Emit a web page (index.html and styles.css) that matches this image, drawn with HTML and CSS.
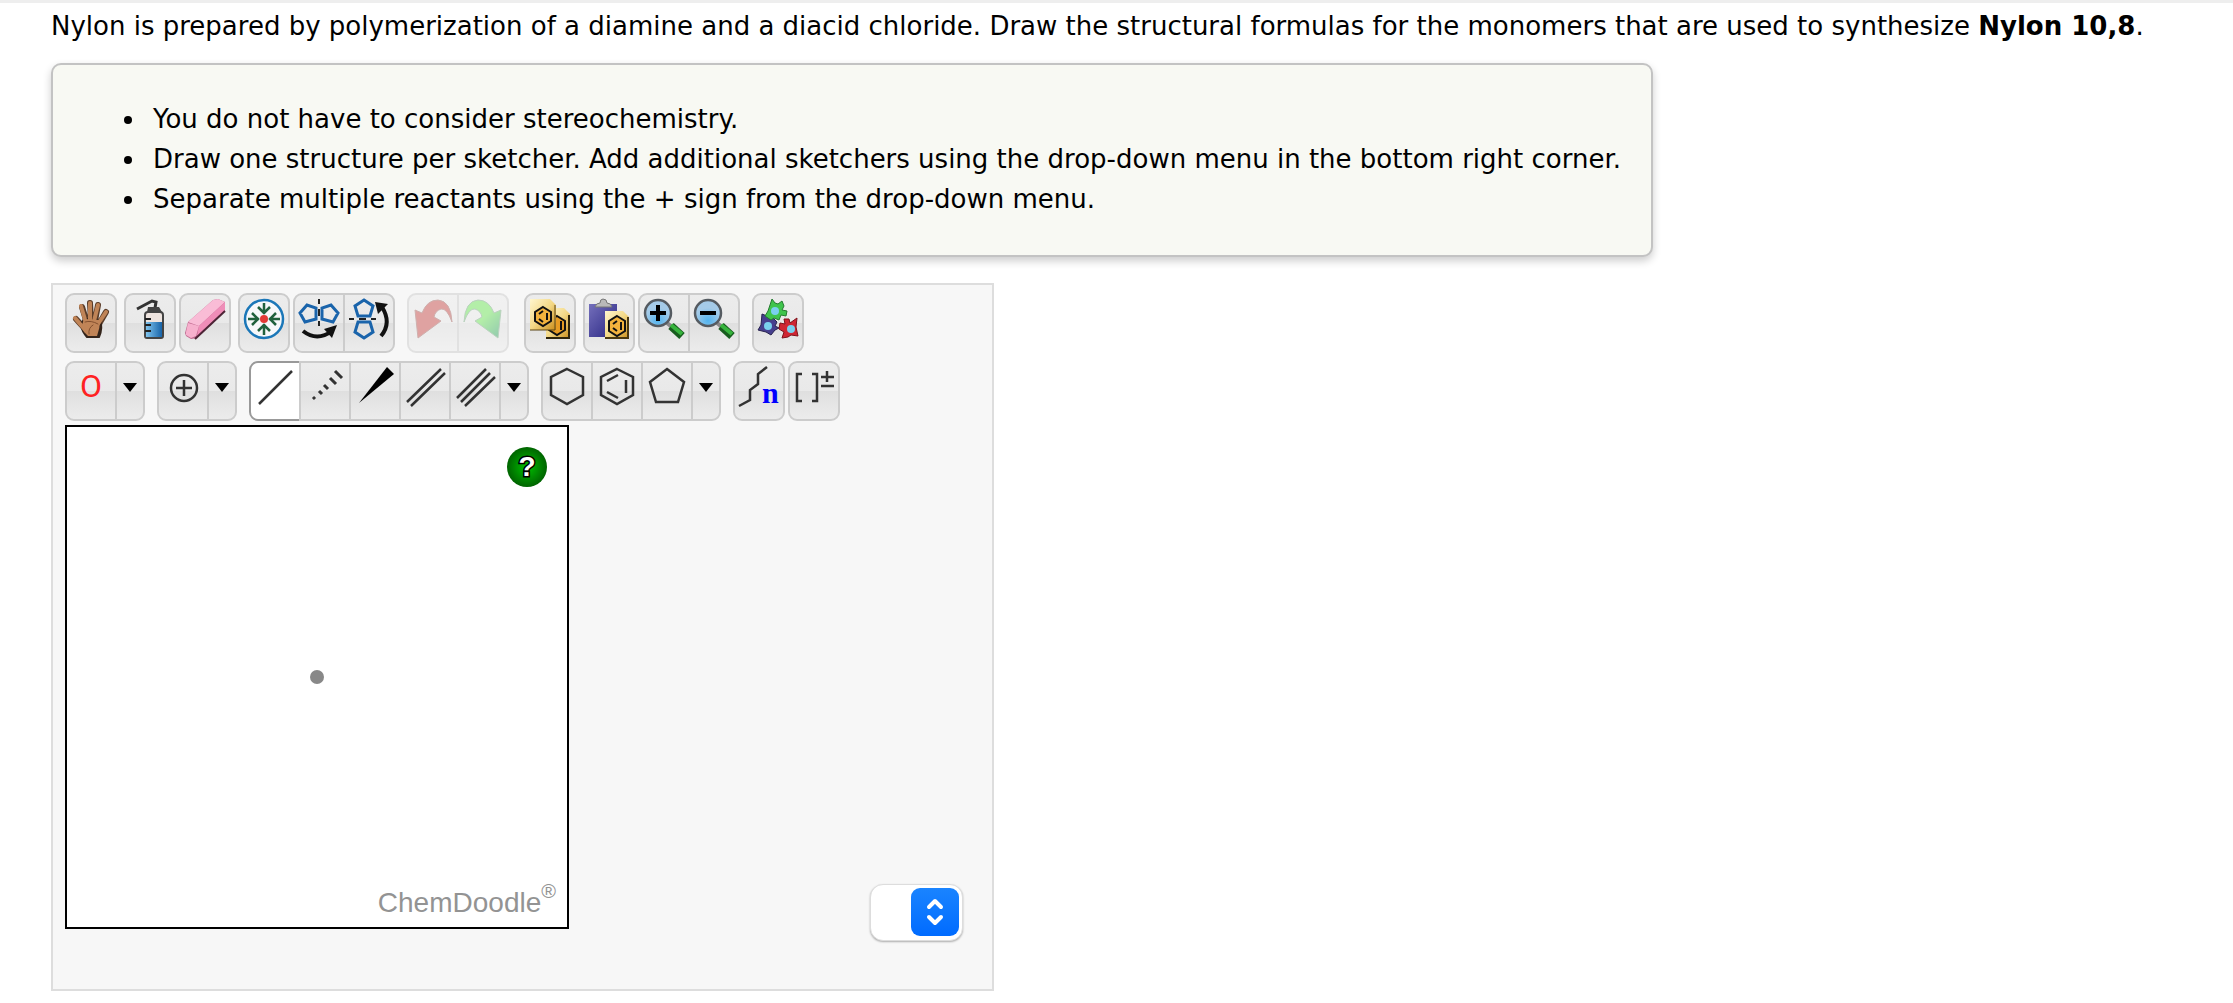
FILE: index.html
```html
<!DOCTYPE html>
<html lang="en">
<head>
  <meta charset="UTF-8" />
  <meta name="viewport" content="width=device-width, initial-scale=1.0"/>
  <title>Nylon 10,8</title>
  <link rel="stylesheet" href="styles.css">
</head>
<body>
  <main class="question">
    <p class="prompt">Nylon is prepared by polymerization of a diamine and a diacid chloride. Draw the structural formulas for the monomers that are used to synthesize <b>Nylon 10,8</b>.</p>

    <div class="hints">
      <ul>
        <li>You do not have to consider stereochemistry.</li>
        <li>Draw one structure per sketcher. Add additional sketchers using the drop-down menu in the bottom right corner.</li>
        <li>Separate multiple reactants using the + sign from the drop-down menu.</li>
      </ul>
    </div>

    <div class="sketcher">
      <!-- edit tools -->
      <div class="toolbar">
        <div class="group">
          <button type="button" class="tool" aria-label="Move">
            <svg viewBox="0 0 40 40">
              <g fill="none" stroke-linecap="round" stroke-linejoin="round">
                <path stroke="#5b3c28" stroke-width="6" d="M16 24L11 8M20 22L19 4M24 22L27 6M28 25L35 13M16 32L5 20"/>
                <path fill="#33241b" stroke="#33241b" stroke-width="2" d="M13 20L29 21Q32 29 28 38L16 38Q11 32 10 26Z"/>
                <path stroke="#c08457" stroke-width="4" d="M15 24L10 7M19 22L19 4M23 22L27 6M27 25L35 13M15 32L4 19"/>
                <path fill="#c08457" d="M13 20L29 21Q29 29 26 37L17 37Q11 32 11 26Z"/>
                <path stroke="#83502f" d="M14 23Q20 21 27 25M18 35Q17 29 22 26"/>
              </g>
            </svg>
          </button>
        </div>
        <div class="group near">
          <button type="button" class="tool" aria-label="Clear">
            <svg viewBox="0 0 40 40">
              <defs><linearGradient id="liquid"><stop offset="0" stop-color="#7fc4ee"/><stop offset="1" stop-color="#1763a8"/></linearGradient></defs>
              <path d="M7 10L22 2L26 3L25 9" fill="none" stroke="#333" stroke-width="3"/>
              <path d="M18 8H29L32 13H17Z" fill="#444"/>
              <path d="M15 16Q15 13 18 13H30Q33 13 33 16V37Q33 39 31 39H17Q15 39 15 37Z" fill="#eee4df" stroke="#444" stroke-width="2"/>
              <path d="M16 23H32V38H16Z" fill="url(#liquid)"/>
              <path d="M15 20H21M15 26H21M15 32H21" stroke="#222" stroke-width="2"/>
            </svg>
          </button>
        </div>
        <div class="group">
          <button type="button" class="tool" aria-label="Erase">
            <svg viewBox="0 0 40 40">
              <path d="M0 34L3 23L28 1L33 0L40 3V12L12 39L6 40L1 37Z" fill="#c06a90"/>
              <path d="M3 23L28 1L33 0L40 3L14 27Z" fill="#f9bcd6"/>
              <path d="M14 27L40 3V11L12 37Z" fill="#ef8db8"/>
              <path d="M1 33L3 24L14 27L11 37L6 39L1 36Z" fill="#f6b0cd"/>
              <path d="M10 40L40 12" stroke="#4c2436" stroke-width="2"/>
            </svg>
          </button>
        </div>
        <div class="group near">
          <button type="button" class="tool" aria-label="Center">
            <svg viewBox="0 0 40 40">
              <circle cx="20" cy="20" r="19" fill="#f6f8fa" stroke="#1b77b8" stroke-width="2.5"/>
              <g fill="none" stroke="#20613d" stroke-width="2.5">
                <path d="M20 4V15M14 8L20 14L26 8"/>
                <path d="M20 36V25M14 32L20 26L26 32"/>
                <path d="M4 20H15M8 14L14 20L8 26"/>
                <path d="M36 20H25M32 14L26 20L32 26"/>
              </g>
              <circle cx="20" cy="20" r="4" fill="#e23a36"/>
            </svg>
          </button>
        </div>
        <div class="group">
          <button type="button" class="tool" aria-label="Flip horizontally">
            <svg viewBox="0 0 40 40">
              <g fill="none">
                <path d="M1 14L8 6L17 9V20L6 23ZM39 14L32 6L23 9V20L34 23Z" stroke="#1a64ab" stroke-width="3"/>
                <path d="M20 0V5M20 10V17M20 22V27" stroke="#222" stroke-width="2"/>
                <path d="M4 32Q18 43 33 32" stroke="#111" stroke-width="4"/>
              </g>
              <path d="M25 30L38 26L33 39Z" fill="#111"/>
            </svg>
          </button>
          <button type="button" class="tool" aria-label="Flip vertically">
            <svg viewBox="0 0 40 40">
              <g fill="none">
                <path d="M15 1L24 7L21 17H9L6 7ZM15 39L24 33L21 23H9L6 33Z" stroke="#1a64ab" stroke-width="3"/>
                <path d="M0 20H5M10 20H17M22 20H27" stroke="#222" stroke-width="2"/>
                <path d="M32 37Q43 24 33 8" stroke="#111" stroke-width="4"/>
              </g>
              <path d="M26 3L39 5L29 15Z" fill="#111"/>
            </svg>
          </button>
        </div>
        <div class="group far disabled">
          <button type="button" class="tool" disabled aria-label="Undo">
            <svg viewBox="0 0 40 40">
              <path d="M2 11L9 14Q14 1 25 1Q38 2 39 23Q34 9 28 10Q22 12 21 18L28 22L5 39Z" fill="#c9504e" stroke="#a86a66"/>
            </svg>
          </button>
          <button type="button" class="tool" disabled aria-label="Redo">
            <svg viewBox="0 0 40 40">
              <defs><linearGradient id="redo" x1="0" y1="0" x2="1" y2="1"><stop offset="0.5" stop-color="#72e65c"/><stop offset="1" stop-color="#2c9a68"/></linearGradient></defs>
              <path d="M38 11L31 14Q26 1 15 1Q2 2 1 23Q6 9 12 10Q18 12 19 18L12 22L35 39Z" fill="url(#redo)" stroke="#7fae88"/>
            </svg>
          </button>
        </div>
        <div class="group farther">
          <button type="button" class="tool" aria-label="Copy">
            <svg viewBox="0 0 40 40">
              <defs><linearGradient id="paper" x1="0" y1="0" x2="1" y2="1"><stop offset="0" stop-color="#fff6cf"/><stop offset="0.5" stop-color="#f3d886"/><stop offset="1" stop-color="#c98b16"/></linearGradient></defs>
              <path d="M16 9H34L40 15V40H16Z" fill="url(#paper)"/>
              <path d="M16 39H39V16" fill="none" stroke="#30260c" stroke-width="2"/>
              <path d="M27 17L35 22V31L27 36L19 31V22Z" fill="#e79c23" stroke="#111" stroke-width="2"/>
              <path d="M31 22V31" stroke="#111" stroke-width="2"/>
              <path d="M0 0H20L26 6V31H0Z" fill="url(#paper)"/>
              <path d="M0 31H25V6" fill="none" stroke="#5b4719"/>
              <path d="M13 8L21 13V22L13 27L5 22V13Z" fill="#f3b33d" stroke="#111" stroke-width="2"/>
              <path d="M9 15L13 12M9 20L13 23M17 14V21" stroke="#111" stroke-width="2"/>
            </svg>
          </button>
        </div>
        <div class="group near">
          <button type="button" class="tool" aria-label="Paste">
            <svg viewBox="0 0 40 40">
              <defs><linearGradient id="board" x1="0" y1="0" x2="1" y2="1"><stop offset="0" stop-color="#746fbb"/><stop offset="1" stop-color="#292683"/></linearGradient></defs>
              <path d="M0 5H28V38H0Z" fill="url(#board)"/>
              <path d="M6 8Q7 4 11 4Q11 0 14 0Q18 0 18 4Q22 4 23 8Z" fill="#b9b9b9" stroke="#777"/>
              <path d="M16 12H34L40 18V40H16Z" fill="url(#paper)"/>
              <path d="M16 39H39V18" fill="none" stroke="#4b3910" stroke-width="2"/>
              <path d="M28 17L36 22V32L28 37L20 32V22Z" fill="#f3b33d" stroke="#111" stroke-width="2"/>
              <path d="M24 25L28 22M24 29L28 32M32 23V31" stroke="#111" stroke-width="2"/>
            </svg>
          </button>
        </div>
        <div class="group">
          <button type="button" class="tool" aria-label="Zoom in">
            <svg viewBox="0 0 40 40">
              <defs><radialGradient id="lens" cy="0.8"><stop offset="0" stop-color="#52b4ef"/><stop offset="1" stop-color="#a5cbe8"/></radialGradient></defs>
              <path d="M22 23L29 29" stroke="#888" stroke-width="4"/>
              <path d="M27 27L38 37" stroke="#175c1e" stroke-width="8"/>
              <path d="M27 26L38 35" stroke="#37b43d" stroke-width="4"/>
              <circle cx="14" cy="14" r="13" fill="url(#lens)" stroke="#555b61" stroke-width="2.5"/>
              <path d="M6 14H22M14 6V22" stroke="#000" stroke-width="4"/>
            </svg>
          </button>
          <button type="button" class="tool" aria-label="Zoom out">
            <svg viewBox="0 0 40 40">
              <path d="M22 23L29 29" stroke="#888" stroke-width="4"/>
              <path d="M27 27L38 37" stroke="#175c1e" stroke-width="8"/>
              <path d="M27 26L38 35" stroke="#37b43d" stroke-width="4"/>
              <circle cx="14" cy="14" r="13" fill="url(#lens)" stroke="#555b61" stroke-width="2.5"/>
              <path d="M6 14H22" stroke="#000" stroke-width="4"/>
            </svg>
          </button>
        </div>
        <div class="group far">
          <button type="button" class="tool" aria-label="Functional groups">
            <svg viewBox="0 0 40 40">
              <path d="M4 15L9 17L11 20L15 19L19 23L17 27L21 29L17 31L13 36L8 33L0 31L3 26Z" fill="#463f8e" stroke="#28234e"/>
              <path d="M14 0L17 4L20 5L24 2L26 7L24 11L29 12L28 17L23 16L21 21L16 19L13 21L7 17L10 12Z" fill="#3fc44c" stroke="#257b30"/>
              <path d="M22 24L27 25L26 20L31 20L32 24L39 19L38 28L40 37L33 36L30 38L24 39L26 33L21 30Z" fill="#cf2633" stroke="#7f121b"/>
              <g fill="#7ad0ee">
                <circle cx="17" cy="12" r="4"/>
                <circle cx="10" cy="27" r="4"/>
                <circle cx="33" cy="30" r="4"/>
              </g>
            </svg>
          </button>
        </div>
      </div>

      <!-- drawing tools -->
      <div class="toolbar">
        <div class="group">
          <button type="button" class="tool label">O</button>
          <button type="button" class="tool more" aria-label="More labels"><svg viewBox="0 0 14 9"><path d="M0 0H14L7 9Z"/></svg></button>
        </div>
        <div class="group far">
          <button type="button" class="tool" aria-label="Increase charge">
            <svg class="line" viewBox="0 0 40 40"><circle cx="21" cy="21" r="13"/><path d="M13 21H29M21 13V29"/></svg>
          </button>
          <button type="button" class="tool more" aria-label="More attributes"><svg viewBox="0 0 14 9"><path d="M0 0H14L7 9Z"/></svg></button>
        </div>
        <div class="group far">
          <button type="button" class="tool active" aria-label="Single bond">
            <svg class="line" viewBox="0 0 40 40"><path d="M4 37L37 4"/></svg>
          </button>
          <button type="button" class="tool" aria-label="Recessed bond">
            <svg class="line" viewBox="0 0 40 40"><path stroke-width="3" d="M8 30L10 32M14 24L17 27M19 18L23 22M25 11L31 17M30 4L37 11"/></svg>
          </button>
          <button type="button" class="tool" aria-label="Protruding bond">
            <svg viewBox="0 0 40 40"><path d="M4 36L32 0L39 7Z"/></svg>
          </button>
          <button type="button" class="tool" aria-label="Double bond">
            <svg class="line" viewBox="0 0 40 40"><path d="M2 35L36 2M6 39L40 6"/></svg>
          </button>
          <button type="button" class="tool" aria-label="Triple bond">
            <svg class="line" viewBox="0 0 40 40"><path d="M2 31L31 2M6 35L35 6M10 39L40 10"/></svg>
          </button>
          <button type="button" class="tool more" aria-label="More bonds"><svg viewBox="0 0 14 9"><path d="M0 0H14L7 9Z"/></svg></button>
        </div>
        <div class="group far">
          <button type="button" class="tool" aria-label="Cyclohexane">
            <svg class="line" viewBox="0 0 40 40"><path d="M20 2L36 10V28L20 37L4 28V10Z"/></svg>
          </button>
          <button type="button" class="tool" aria-label="Benzene">
            <svg class="line" viewBox="0 0 40 40"><path d="M20 2L36 10V28L20 37L4 28V10ZM10 14L21 8M29 13V26M10 25L21 31"/></svg>
          </button>
          <button type="button" class="tool" aria-label="Cyclopentane">
            <svg class="line" viewBox="0 0 40 40"><path d="M20 2L37 15L31 35H9L3 15Z"/></svg>
          </button>
          <button type="button" class="tool more" aria-label="More rings"><svg viewBox="0 0 14 9"><path d="M0 0H14L7 9Z"/></svg></button>
        </div>
        <div class="group far">
          <button type="button" class="tool" aria-label="Chain">
            <svg class="line" viewBox="0 0 40 40"><path d="M28 0L19 7V17L11 23V33L0 39"/><text class="chain-n" x="23" y="36">n</text></svg>
          </button>
        </div>
        <div class="group">
          <button type="button" class="tool" aria-label="Brackets and charge">
            <svg class="line" viewBox="0 0 40 40"><path d="M8 7H3V34H8M18 7H23V34H18M27 10H40M33 4V15M27 19H40"/></svg>
          </button>
        </div>
      </div>

      <div class="workspace">
        <div class="canvas">
          <button type="button" class="help">?</button>
          <span class="dot"></span>
          <span class="brand">ChemDoodle<sup>®</sup></span>
        </div>
        <div class="picker">
          <select aria-label="Add sketcher">
            <option></option>
            <option>+</option>
          </select>
          <svg viewBox="0 0 48 48"><path d="M18 19L24 13L30 19M18 29L24 35L30 29"/></svg>
        </div>
      </div>
    </div>
  </main>
</body>
</html>
```

FILE: styles.css
```css
* {
  box-sizing: border-box;
}
body {
  margin: 0;
  border-top: 3px solid #eee;
  background-color: white;
  color: black;
  font-family: Verdana, "DejaVu Sans", sans-serif;
  font-size: 26px;
  line-height: 40px;
}
.question {
  padding: 3px 51px 8px;
}
.prompt {
  margin: 0 0 17px;
}
.hints {
  width: fit-content;
  padding: 34px 30px 36px 0;
  border: 2px solid #c3c3c3;
  border-radius: 10px;
  background-color: #f8f9f3;
  box-shadow: 0 4px 8px rgba(0, 0, 0, 0.2);
}
.hints ul {
  margin: 0;
  padding-left: 94px;
}
.hints li {
  padding-left: 6px;
}

/* sketcher */
.sketcher {
  max-width: 943px;
  margin-top: 26px;
  padding: 8px 29px 48px 12px;
  border: 2px solid #ddd;
  background-color: #f7f7f7;
}
.toolbar {
  display: flex;
  gap: 3px;
  margin-bottom: 8px;
}
.toolbar + .toolbar {
  margin-bottom: 4px;
}
.group {
  display: flex;
}
.near {
  margin-left: 4px;
}
.far {
  margin-left: 9px;
}
.farther {
  margin-left: 12px;
}
.disabled {
  opacity: 0.5;
}
.tool {
  display: flex;
  width: 52px;
  height: 60px;
  padding: 4px;
  border: 2px solid #ccc;
  background: linear-gradient(#ececec, #e9e9e9 50%, #dfdfdf 50%, #ececec);
  cursor: pointer;
}
.tool + .tool {
  margin-left: -2px;
}
.tool:first-child {
  border-top-left-radius: 9px;
  border-bottom-left-radius: 9px;
}
.tool:last-child {
  border-top-right-radius: 9px;
  border-bottom-right-radius: 9px;
}
.tool svg {
  display: block;
  width: 40px;
  height: 40px;
  overflow: visible;
}
.tool .line {
  fill: none;
  stroke: #333;
  stroke-width: 2.5;
}
.active {
  border-color: #999;
  background: white;
}
.label {
  justify-content: center;
  color: #ff2222;
  font-family: Roboto, sans-serif;
  font-size: 32px;
  line-height: 38px;
}
.more {
  width: 30px;
  padding: 20px 6px;
}
.more svg {
  width: 14px;
  height: 9px;
}
.line .chain-n {
  fill: #0000ff;
  stroke: none;
  font-family: "Liberation Serif", serif;
  font-size: 30px;
  font-weight: bold;
}

/* drawing area */
.workspace {
  display: flex;
  justify-content: space-between;
  align-items: flex-end;
}
.canvas {
  position: relative;
  display: flex;
  justify-content: center;
  align-items: center;
  width: 504px;
  height: 504px;
  margin-bottom: 12px;
  border: 2px solid black;
  background-color: white;
}
.help {
  position: absolute;
  top: 20px;
  right: 20px;
  width: 40px;
  height: 40px;
  padding: 0;
  border: none;
  border-radius: 50%;
  background: radial-gradient(circle closest-side, #00c000, #006400);
  color: white;
  font-family: "Liberation Sans", Arial, sans-serif;
  font-size: 28px;
  font-weight: bold;
  line-height: 40px;
  -webkit-text-stroke: 3px black;
  paint-order: stroke fill;
  cursor: pointer;
}
.dot {
  width: 14px;
  height: 14px;
  border-radius: 50%;
  background-color: #888;
}
.brand {
  position: absolute;
  right: 11px;
  bottom: 4px;
  color: #939393;
  font-family: "Liberation Sans", Arial, sans-serif;
  font-size: 28px;
}
.brand sup {
  font-size: 20px;
  line-height: 0;
  vertical-align: 14px;
}

/* sketcher drop-down */
.picker {
  position: relative;
  width: 93px;
  height: 57px;
}
.picker select {
  width: 100%;
  height: 100%;
  appearance: none;
  border: 1px solid #ddd;
  border-radius: 13px;
  background-color: white;
  box-shadow: 0 1px 2px rgba(0, 0, 0, 0.3);
}
.picker svg {
  position: absolute;
  top: 4px;
  right: 4px;
  width: 48px;
  height: 48px;
  border-radius: 9px;
  background: linear-gradient(#1a84ff, #006bff);
  fill: none;
  stroke: white;
  stroke-width: 4;
  stroke-linecap: round;
  stroke-linejoin: round;
  pointer-events: none;
}
```
